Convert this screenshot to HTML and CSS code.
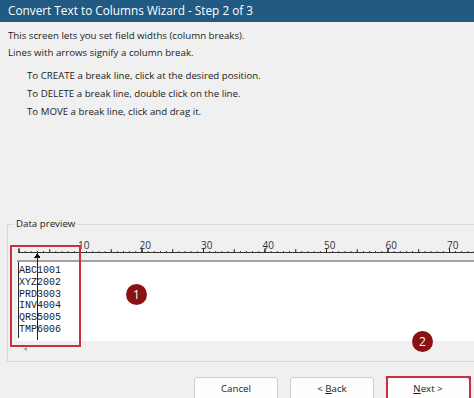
FILE: index.html
```html
<!DOCTYPE html>
<html>
<head>
    <title>Convert Text to Columns Wizard</title>
    <link rel="stylesheet" href="styles.css">
</head>
<body>
    <div class="titlebar">Convert Text to Columns Wizard - Step 2 of 3</div>

    <div class="content">
        <p class="intro">This screen lets you set field widths (column breaks).<br>Lines with arrows signify a column break.</p>

        <ul class="steps">
            <li>To CREATE a break line, click at the desired position.</li>
            <li>To DELETE a break line, double click on the line.</li>
            <li>To MOVE a break line, click and drag it.</li>
        </ul>

        <!-- Data preview group -->
        <fieldset class="group">
            <legend>Data preview</legend>
            <div class="preview">
                <svg class="ruler" width="457" height="26">
                    <defs>
                        <pattern id="tickMinor" x="1.5" y="0" width="6.15" height="26" patternUnits="userSpaceOnUse">
                            <rect x="0" y="16.5" width="1" height="1.5" fill="#333"></rect>
                        </pattern>
                        <pattern id="tickMid" x="1.5" y="0" width="30.75" height="26" patternUnits="userSpaceOnUse">
                            <rect x="0" y="15" width="1" height="3" fill="#333"></rect>
                        </pattern>
                        <pattern id="tickMajor" x="1.5" y="0" width="61.5" height="26" patternUnits="userSpaceOnUse">
                            <rect x="0" y="13.5" width="1" height="5" fill="#222"></rect>
                        </pattern>
                    </defs>
                    <rect x="1" y="0" width="456" height="26" fill="url(#tickMinor)"></rect>
                    <rect x="1" y="0" width="456" height="26" fill="url(#tickMid)"></rect>
                    <rect x="1" y="0" width="456" height="26" fill="url(#tickMajor)"></rect>
                    <rect x="1" y="18" width="456" height="1" fill="#333"></rect>
                    <g class="ruler-labels">
                        <text x="61" y="14.5">10</text>
                        <text x="122.5" y="14.5">20</text>
                        <text x="184" y="14.5">30</text>
                        <text x="245.5" y="14.5">40</text>
                        <text x="307" y="14.5">50</text>
                        <text x="368.5" y="14.5">60</text>
                        <text x="430" y="14.5">70</text>
                    </g>
                </svg>
                <div class="data">
<pre>ABC1001
XYZ2002
PRD3003
INV4004
QRS5005
TMP6006</pre>
                </div>
                <div class="hscroll"><span class="scroll-left"></span></div>

                <!-- column break -->
                <svg class="break" width="7" height="87">
                    <path d="M3.5 0 L6.5 4.5 L0.5 4.5 Z" fill="#111"></path>
                    <rect x="3" y="4" width="1" height="83" fill="#222"></rect>
                </svg>
            </div>
        </fieldset>

        <div class="buttons">
            <button class="btn">Cancel</button>
            <button class="btn">&lt; <u>B</u>ack</button>
            <button class="btn btn-default"><u>N</u>ext &gt;</button>
        </div>
    </div>

    <!-- annotations -->
    <div class="mark mark-data"></div>
    <div class="mark mark-next"></div>
    <div class="badge badge-1">1</div>
    <div class="badge badge-2">2</div>
</body>
</html>
```

FILE: styles.css
```css
body {
    margin: 0;
    background: #f0f0f0;
    font-family: "Open Sans", sans-serif;
    font-size: 9.7px;
    color: #1b1b1b;
    overflow: hidden;
}
.titlebar {
    height: 22px;
    line-height: 21px;
    padding-left: 8px;
    background-color: #215a83;
    color: white;
    font-size: 11.8px;
}
.content {
    padding-left: 8px;
}
.intro {
    margin: 5px 0 0;
    line-height: 17px;
}
.steps {
    list-style: none;
    margin: 6px 0 0;
    padding-left: 19px;
    line-height: 18px;
}
.group {
    margin: 95px 0 0 -1px;
    padding: 0 0 0 6px;
    border: 1px solid #dadada;
    border-right: none;
    min-width: 0;
}
.group legend {
    padding: 0 2px;
    line-height: 16px;
}
.preview {
    position: relative;
    margin: 2px 0 0 3px;
}
.ruler {
    display: block;
    shape-rendering: crispEdges;
}
.ruler-labels text {
    font-family: "Open Sans", sans-serif;
    font-size: 10px;
    fill: #333;
    shape-rendering: auto;
}
.data {
    height: 79px;
    background: white;
    border-top: 2px solid #a3a3a3;
    padding-left: 1px;
}
.data pre {
    margin: 0;
    height: 73px;
    padding-top: 3px;
    border-left: 1px solid #222;
    font-family: "Liberation Mono", monospace;
    font-size: 10px;
    line-height: 11.8px;
    color: #222;
}
.hscroll {
    height: 20px;
    position: relative;
}
.scroll-left {
    position: absolute;
    left: 6px;
    top: 6px;
    width: 0;
    height: 0;
    border-top: 2.5px solid transparent;
    border-bottom: 2.5px solid transparent;
    border-right: 4px solid #a6a6a6;
}
.break {
    position: absolute;
    left: 17px;
    top: 19px;
    shape-rendering: crispEdges;
}
.buttons {
    display: flex;
    justify-content: flex-end;
    gap: 12px;
    margin-top: 15px;
    padding-right: 4px;
}
.btn {
    width: 84px;
    height: 23px;
    padding: 0;
    background-color: #fdfdfd;
    border: 1px solid #d0d0d0;
    border-radius: 3px;
    font-family: "Open Sans", sans-serif;
    font-size: 9.7px;
    color: #1b1b1b;
}
.btn-default {
    border-color: #2f7fd0;
}
.mark {
    position: absolute;
    border: 2px solid #cc2f3a;
}
.mark-data {
    left: 10px;
    top: 245px;
    width: 67px;
    height: 98px;
}
.mark-next {
    left: 386px;
    top: 376px;
    width: 81px;
    height: 20px;
}
.badge {
    position: absolute;
    width: 21px;
    height: 21px;
    border-radius: 50%;
    background-color: #8a1111;
    color: white;
    font-size: 12px;
    line-height: 21px;
    text-align: center;
}
.badge-1 {
    left: 126px;
    top: 284px;
}
.badge-2 {
    left: 412px;
    top: 331px;
}
```
